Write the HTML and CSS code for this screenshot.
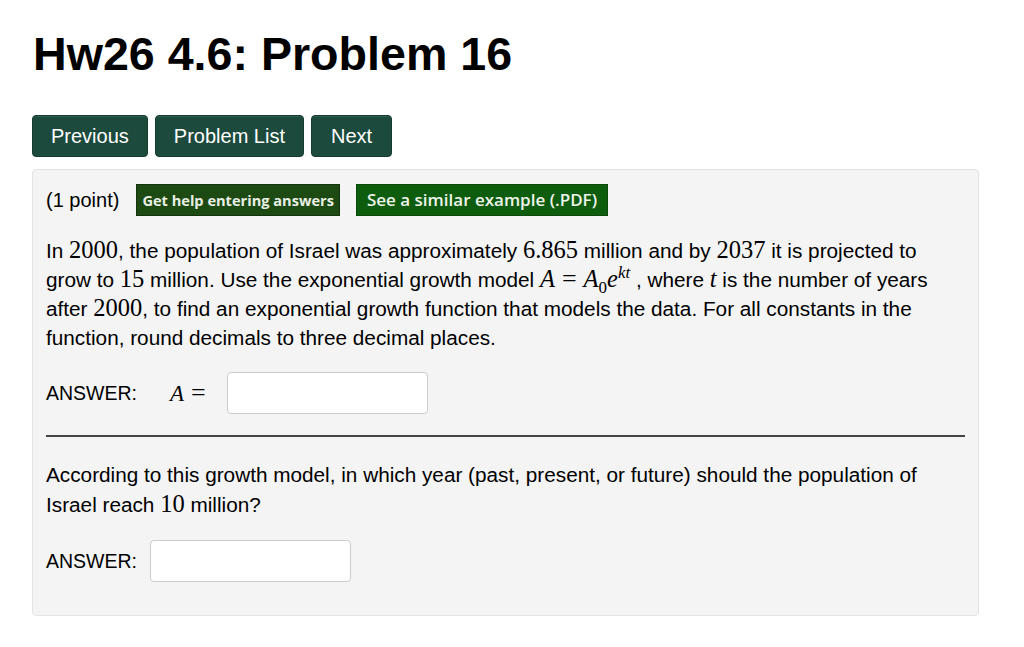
FILE: index.html
```html
<!DOCTYPE html>
<html lang="en">
<head>
    <meta charset="UTF-8">
    <meta name="viewport" content="width=device-width, initial-scale=1.0">
    <title>Hw26 4.6: Problem 16</title>
    <link rel="stylesheet" href="styles.css">
</head>
<body>
    <div class="page">
        <h1>Hw26 4.6: Problem 16</h1>

        <div class="nav">
            <button class="nav-btn">Previous</button>
            <button class="nav-btn">Problem List</button>
            <button class="nav-btn">Next</button>
        </div>

        <div class="problem">
            <div class="problem-head">
                <span class="points">(1 point)</span>
                <span class="help-btn">Get help entering answers</span>
                <span class="example-btn">See a similar example (.PDF)</span>
            </div>

            <p class="text">
                In <span class="m">2000</span>, the population of Israel was approximately <span class="m">6.865</span> million and by <span class="m">2037</span> it is projected to<br>
                grow to <span class="m">15</span> million. Use the exponential growth model <span class="m"><i>A</i><span class="op">=</span><i>A</i><sub>0</sub><i>e</i><sup><i>kt</i></sup></span> , where <span class="m"><i>t</i></span> is the number of years<br>
                after <span class="m">2000</span>, to find an exponential growth function that models the data. For all constants in the<br>
                function, round decimals to three decimal places.
            </p>

            <div class="answer">
                <span>ANSWER:</span>
                <span class="m eq"><i>A</i><span class="op">=</span></span>
                <input type="text" class="answer-box">
            </div>

            <hr class="divider">

            <p class="text second">
                According to this growth model, in which year (past, present, or future) should the population of<br>
                Israel reach <span class="m">10</span> million?
            </p>

            <div class="answer">
                <span>ANSWER:</span>
                <input type="text" class="answer-box">
            </div>
        </div>
    </div>
</body>
</html>
```

FILE: styles.css
```css
body {
    margin: 0;
    background: #ffffff;
    color: #000;
    font-family: "Liberation Sans", Arial, sans-serif;
}
.page {
    padding: 0 45px 0 32px;
}
h1 {
    margin: 27px 0 0 1px;
    font-size: 46.6px;
    line-height: 54px;
    font-weight: bold;
}
.nav {
    display: flex;
    gap: 7px;
    margin-top: 34px;
}
.nav-btn {
    height: 42px;
    padding: 0 18px;
    font-family: "Liberation Sans", Arial, sans-serif;
    font-size: 20px;
    color: #fff;
    background-color: #1c4a3d;
    border: 1px solid #153a30;
    border-radius: 4px;
    box-shadow: inset 0 1px 0 rgba(255, 255, 255, 0.1);
}
.nav-btn:last-child {
    padding: 0 19px;
}
.problem {
    margin-top: 12px;
    padding: 14px 13px;
    background: #f4f4f4;
    border: 1px solid #e3e3e3;
    border-radius: 4px;
    box-sizing: border-box;
    height: 447px;
}
.problem-head {
    display: flex;
    align-items: center;
    height: 32px;
    font-size: 20px;
}
.points {
    margin-right: 17px;
}
.help-btn {
    display: inline-block;
    padding: 0 5px;
    height: 30px;
    line-height: 30px;
    font-family: "Open Sans", sans-serif;
    font-size: 14.6px;
    font-weight: 700;
    color: #e8efe4;
    background: #1d4a12;
    border: 1px solid #12340b;
    margin-right: 16px;
}
.example-btn {
    display: inline-block;
    padding: 0 10px;
    height: 30px;
    line-height: 30px;
    font-family: "Open Sans", sans-serif;
    font-size: 17px;
    font-weight: 600;
    color: #eef4ea;
    background: #0e5c0e;
    border: 1px solid #0a4a0a;
}
.text {
    margin: 20px 0 0;
    font-size: 20.75px;
    line-height: 29px;
}
.text.second {
    margin-top: 23px;
    line-height: 30px;
}
.m {
    font-family: "Liberation Serif", "Times New Roman", serif;
    font-size: 24.5px;
    line-height: 0;
}
.op {
    margin: 0 7px;
    font-size: 26px;
}
.m sub, .m sup {
    font-size: 17px;
    line-height: 0;
}
.answer {
    display: flex;
    align-items: center;
    margin-top: 20px;
    font-size: 19.5px;
}
.answer > span:first-child {
    margin-right: 13px;
}
.eq {
    margin-left: 20px;
    margin-right: 14px;
    font-size: 23px;
    line-height: 1;
}
.answer-box {
    width: 201px;
    height: 42px;
    box-sizing: border-box;
    border: 1px solid #cccccc;
    border-radius: 4px;
    background: #fff;
    font-size: 18px;
}
.divider {
    margin: 21px 0 0;
    border: 0;
    border-top: 2px solid #444;
}
```
